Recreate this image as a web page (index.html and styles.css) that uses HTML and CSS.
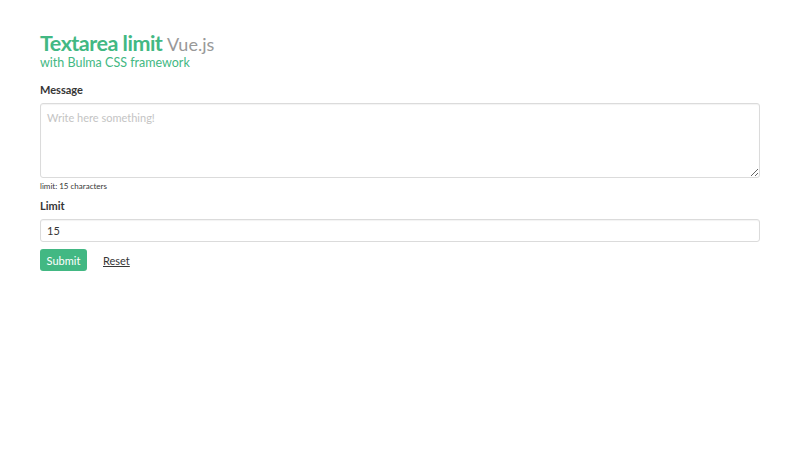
FILE: index.html
```html
<!DOCTYPE html>
<html>
<head>
<meta charset="utf-8">
<link rel="stylesheet" href="styles.css">
</head>
<body>
<div class="container">
  <h1 class="title">Textarea limit <span class="vue">Vue.js</span></h1>
  <p class="subtitle">with Bulma CSS framework</p>
  <div class="field">
    <label class="label">Message</label>
    <textarea class="textarea" placeholder="Write here something!"></textarea>
    <p class="help">limit: 15 characters</p>
  </div>
  <div class="field">
    <label class="label">Limit</label>
    <input class="input" type="text" value="15">
  </div>
  <div class="buttons">
    <button class="btn-submit">Submit</button>
    <a class="reset" href="#">Reset</a>
  </div>
</div>
</body>
</html>
```
FILE: styles.css
```css
html, body { margin: 0; padding: 0; background: #fff; }
body { font-family: "Lato", "Open Sans", sans-serif; color: #363636; }
.container { padding: 31px 40px; }
.title { margin: 0; font-size: 21.5px; font-weight: 700; color: #42b883; line-height: 24px; letter-spacing: -0.5px; }
.vue { font-size: 18px; font-weight: 400; color: #999; letter-spacing: 0; }
.subtitle { margin: 0; font-size: 12.5px; color: #42b883; line-height: 14px; }
.field { display: flex; flex-direction: column; }
.label { display: block; font-size: 11px; font-weight: 700; color: #363636; margin-top: 13px; line-height: 14px; margin-bottom: 6px; }
.field + .field .label { margin-top: 7px; }
.textarea { display: block; box-sizing: border-box; width: 720px; height: 75px; border: 1px solid #dbdbdb; border-radius: 3px; padding: 7px 6px; font-family: inherit; font-size: 11px; box-shadow: inset 0 1px 1px rgba(10,10,10,.05); resize: vertical; margin: 0; }
.textarea::placeholder { color: #c4c4c4; }
.help { margin: 2px 0 0; font-size: 8px; color: #363636; line-height: 12px; }
.input { display: block; box-sizing: border-box; width: 720px; height: 23px; border: 1px solid #dbdbdb; border-radius: 3px; padding: 0 6px; font-family: inherit; font-size: 11px; color: #363636; margin: 0; box-shadow: inset 0 1px 1px rgba(10,10,10,.05); }
.buttons { display: flex; align-items: center; margin-top: 7px; gap: 16px; }
.btn-submit { background: #42b883; color: #fff; border: none; border-radius: 3px; height: 22px; width: 47px; font-family: inherit; font-size: 11px; padding: 0; }
.reset { color: #363636; font-size: 11px; text-decoration: underline; }
```
